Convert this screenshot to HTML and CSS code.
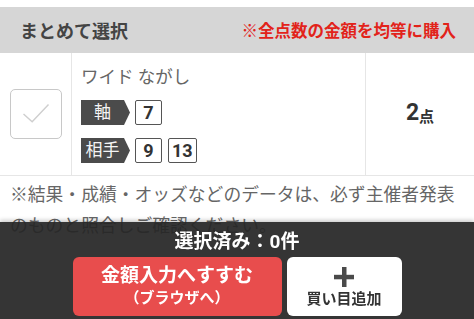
FILE: index.html
```html
<!DOCTYPE html>
<html lang="ja">
<head>
    <meta charset="UTF-8">
    <meta name="viewport" content="width=device-width, initial-scale=1.0">
    <title>まとめて選択</title>
    <link rel="stylesheet" href="styles.css">
</head>
<body>
    <div class="page">
        <div class="select-head">
            <span class="select-title">まとめて選択</span>
            <span class="select-notice">※全点数の金額を均等に購入</span>
        </div>

        <div class="bet-row">
            <div class="check-col">
                <div class="checkbox">
                    <svg width="52" height="50" viewBox="0 0 52 50">
                        <polyline points="13,25 22,33 39,15" fill="none" stroke="#cfcfcf" stroke-width="1.5"/>
                    </svg>
                </div>
            </div>
            <div class="bet-info">
                <div class="bet-type">ワイド ながし</div>
                <div class="horse-line">
                    <span class="tag">軸</span>
                    <span class="num">7</span>
                </div>
                <div class="horse-line">
                    <span class="tag">相手</span>
                    <span class="num">9</span>
                    <span class="num">13</span>
                </div>
            </div>
            <div class="count-col">
                <span class="count">2</span><span class="count-unit">点</span>
            </div>
        </div>

        <p class="note">※結果・成績・オッズなどのデータは、必ず主催者発表のものと照合しご確認ください。</p>
    </div>

    <div class="footer">
        <div class="footer-title">選択済み：0件</div>
        <div class="footer-buttons">
            <button class="btn-next">
                <span class="btn-main">金額入力へすすむ</span>
                <span class="btn-sub">（ブラウザへ）</span>
            </button>
            <button class="btn-add">
                <svg width="22" height="22" viewBox="0 0 22 22">
                    <rect x="9" y="1" width="4.5" height="20" fill="#4a4a4a"/>
                    <rect x="1" y="8.8" width="20" height="4.5" fill="#4a4a4a"/>
                </svg>
                <span class="btn-add-label">買い目追加</span>
            </button>
        </div>
    </div>
</body>
</html>
```

FILE: styles.css
```css
body {
    margin: 0;
    font-family: Roboto, "Noto Sans CJK JP", sans-serif;
    background-color: #fff;
    color: #333;
}

.page {
    padding-top: 7px;
}

.select-head {
    height: 46px;
    background-color: #d6d6d6;
    display: flex;
    align-items: center;
    justify-content: space-between;
    padding: 0 18px 0 20px;
}

.select-title {
    font-size: 18px;
    font-weight: bold;
    color: #444;
}

.select-notice {
    font-size: 16.5px;
    font-weight: bold;
    color: #e2231a;
}

.bet-row {
    display: flex;
    height: 122px;
    border-bottom: 1px solid #e6e6e6;
}

.check-col {
    width: 71px;
    border-right: 1px solid #e6e6e6;
    display: flex;
    align-items: center;
    justify-content: center;
}

.checkbox {
    width: 52px;
    height: 50px;
    box-sizing: border-box;
    border: 1px solid #c8c8c8;
    border-radius: 5px;
    margin-left: 1px;
    display: flex;
    align-items: center;
    justify-content: center;
}

.checkbox svg {
    display: block;
}

.bet-info {
    flex: 1;
    padding: 10px 9px;
}

.bet-type {
    font-size: 17.5px;
    line-height: 28px;
    color: #666;
}

.horse-line {
    display: flex;
    align-items: center;
    gap: 5px;
    margin-top: 9px;
}

.horse-line + .horse-line {
    margin-top: 13px;
}

.tag {
    width: 49px;
    height: 25px;
    background-color: #4b4b4b;
    color: #f4f4f4;
    font-size: 17px;
    line-height: 25px;
    padding-right: 6px;
    box-sizing: border-box;
    text-align: center;
    clip-path: polygon(0 0, 43px 0, 100% 50%, 43px 100%, 0 100%);
}

.num {
    min-width: 27px;
    height: 25px;
    box-sizing: border-box;
    border: 1px solid #555;
    border-radius: 2px;
    font-size: 18px;
    font-weight: bold;
    line-height: 23px;
    text-align: center;
    color: #333;
    padding: 0 3px;
}

.num + .num {
    margin-left: 1px;
}

.count-col {
    width: 108px;
    border-left: 1px solid #e6e6e6;
    display: flex;
    align-items: center;
    justify-content: center;
    padding-bottom: 4px;
    color: #333;
}

.count {
    font-size: 23px;
    font-weight: bold;
}

.count-unit {
    font-size: 15px;
    font-weight: bold;
    margin-top: 6px;
}

.note {
    margin: 0;
    padding: 3px 10px 0;
    font-size: 17.8px;
    line-height: 31px;
    color: #666;
}

.footer {
    position: fixed;
    left: 0;
    right: 0;
    bottom: 0;
    height: 97px;
    background-color: rgba(38, 38, 38, 0.93);
    box-shadow: 0 -2px 4px rgba(0, 0, 0, 0.2);
}

.footer-title {
    text-align: center;
    color: #fff;
    font-size: 19px;
    font-weight: bold;
    line-height: 24px;
    padding-top: 8px;
}

.footer-buttons {
    display: flex;
    justify-content: center;
    gap: 5px;
    margin-top: 3px;
}

button {
    font-family: inherit;
    border: none;
    border-radius: 6px;
    height: 59px;
    display: flex;
    flex-direction: column;
    align-items: center;
    justify-content: center;
    cursor: pointer;
}

.btn-next {
    width: 209px;
    background-color: #e84d4d;
    color: #fff;
}

.btn-main {
    font-size: 19px;
    font-weight: bold;
    line-height: 24px;
}

.btn-sub {
    font-size: 15px;
    font-weight: bold;
    line-height: 21px;
}

.btn-add {
    width: 115px;
    background-color: #fff;
    color: #333;
    padding-top: 4px;
}

.btn-add svg {
    display: block;
}

.btn-add-label {
    font-size: 15px;
    font-weight: bold;
    line-height: 22px;
}
```
